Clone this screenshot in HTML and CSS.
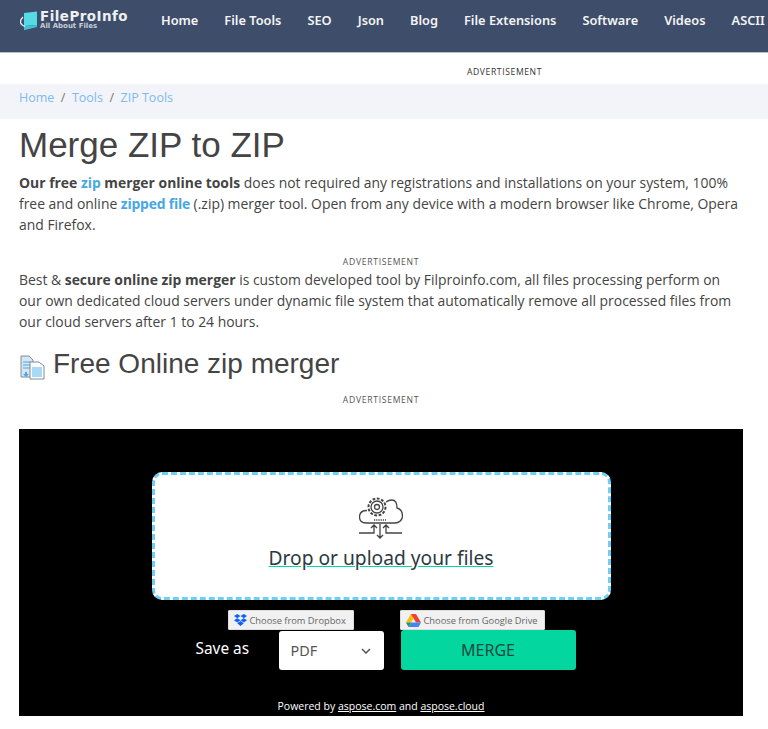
FILE: index.html
```html
<!DOCTYPE html>
<html lang="en">
<head>
	<meta charset="UTF-8">
	<title>Merge ZIP to ZIP</title>
	<link rel="stylesheet" href="styles.css">
</head>
<body>
	<div class="top-nav">
		<a class="logo" href="#">
			<svg class="logo-mark" width="18" height="20" viewBox="0 0 18 20">
				<path d="M4 2 L17 0.5 V14 L4 15 Z" fill="#56dbe6"/>
				<path d="M4 15 L17 14 V16 L5 19 L4 19 Z" fill="#3fc3d4"/>
				<path d="M3 6 C-1 10 0 14 5 15.5" fill="none" stroke="#e6edf3" stroke-width="1.3"/>
			</svg>
			<span class="logo-text">
				<span class="logo-name">FileProInfo</span>
				<span class="logo-sub">All About Files</span>
			</span>
		</a>
		<a class="nav-link" href="#">Home</a>
		<a class="nav-link" href="#">File Tools</a>
		<a class="nav-link" href="#">SEO</a>
		<a class="nav-link" href="#">Json</a>
		<a class="nav-link" href="#">Blog</a>
		<a class="nav-link" href="#">File Extensions</a>
		<a class="nav-link" href="#">Software</a>
		<a class="nav-link" href="#">Videos</a>
		<a class="nav-link" href="#">ASCII</a>
	</div>

	<div class="ad-top">ADVERTISEMENT</div>

	<div class="breadcrumb">
		<a href="#">Home</a><span class="sep">/</span><a href="#">Tools</a><span class="sep">/</span><a href="#">ZIP Tools</a>
	</div>

	<div class="content">
		<h1>Merge ZIP to ZIP</h1>
		<p><b>Our free <a href="#">zip</a> merger online tools</b> does not required any registrations and installations on your system, 100% free and online <a class="tight-link" href="#">zipped file</a> (.zip) merger tool. Open from any device with a modern browser like Chrome, Opera and Firefox.</p>
		<div class="ad-label ad-mid">ADVERTISEMENT</div>
		<p>Best &amp; <b>secure online zip merger</b> is custom developed tool by Filproinfo.com, all files processing perform on our own dedicated cloud servers under dynamic file system that automatically remove all processed files from our cloud servers after 1 to 24 hours.</p>
		<h2>
			<svg class="doc-icon" width="26" height="26" viewBox="0 0 26 26">
				<path d="M2 2 H10 L14 6 V23 H2 Z" fill="#d8e6f2" stroke="#7f8c99"/>
				<path d="M4 8 H12 M4 11 H12 M4 14 H12" stroke="#4aa8e0"/>
				<path d="M6 18 H8 V20 H10 L7 23 L4 20 H6 Z" fill="#4aa8e0"/>
				<path d="M11 8 H20 L25 12 V25 H11 Z" fill="#fff" stroke="#7f8c99"/>
				<rect x="13" y="13" width="10" height="10" fill="#a9daf5"/>
			</svg>
			Free Online zip merger
		</h2>
		<div class="ad-label ad-low">ADVERTISEMENT</div>

		<div class="app-panel">
			<div class="drop-box">
				<svg class="cloud-icon" width="44" height="42" viewBox="0 0 44 42" fill="none" stroke="#444" stroke-width="1.3">
					<path d="M8 26 C2 26 0.5 23 0.5 20 C0.5 16 3 13.5 8 13.5 M27 5 C29 3.5 31 3 33 3 C37 3 38 7 38 11 C42 12 43.5 15 43.5 19 C43.5 23 40 26 36 26 H8"/>
					<circle cx="18" cy="10" r="8.5" stroke-width="2" stroke-dasharray="2.8 1.6"/>
					<circle cx="18" cy="10" r="6"/>
					<circle cx="18" cy="10" r="2.5"/>
					<path d="M15 23 H27" stroke-dasharray="1.2 1" stroke-width="1.4"/>
					<path d="M0 36 H15 V29 M12 31 L15 28 L18 31 M21 27 V41 M18 38 L21 41 L24 38 M24 31 L27 28 L30 31 M27 29 V36 H43"/>
				</svg>
				<a class="drop-link" href="#">Drop or upload your files</a>
			</div>
			<div class="controls">
				<div class="save-col">
					<button class="picker picker-dropbox">
						<svg width="13" height="12" viewBox="0 0 13 12" fill="#0f62fe">
							<path d="M3.2 0 L6.5 2.1 L3.2 4.2 L0 2.1 Z M9.8 0 L13 2.1 L9.8 4.2 L6.5 2.1 Z M0 6.3 L3.2 4.2 L6.5 6.3 L3.2 8.4 Z M9.8 4.2 L13 6.3 L9.8 8.4 L6.5 6.3 Z M3.2 9.2 L6.5 7 L9.8 9.2 L6.5 12 Z"/>
						</svg>
						Choose from Dropbox
					</button>
					<div class="save-row">
						<span class="save-label">Save as</span>
						<div class="format-select">
							PDF
							<svg width="10" height="6" viewBox="0 0 10 6" fill="none" stroke="#555" stroke-width="1.5"><path d="M1 1 L5 5 L9 1"/></svg>
						</div>
					</div>
				</div>
				<div class="merge-col">
					<button class="picker picker-drive">
						<svg width="15" height="13" viewBox="0 0 15 13">
							<path d="M5 0 H10 L5 8.5 H0 Z" fill="#fbbc04"/>
							<path d="M5 0 H10 L15 8.5 H10 Z" fill="#ea4335"/>
							<path d="M5 8.5 H15 L12.5 13 H2.5 Z" fill="#4285f4"/>
							<path d="M0 8.5 H5 L2.5 13 Z" fill="#1a9c5b"/>
						</svg>
						Choose from Google Drive
					</button>
					<button class="merge-btn">MERGE</button>
				</div>
			</div>
			<div class="powered">Powered by <a href="#">aspose.com</a> and <a href="#">aspose.cloud</a></div>
		</div>
	</div>
</body>
</html>
```

FILE: styles.css
```css
*{
	margin: 0;
	padding: 0;
	box-sizing: border-box;
}
body{
	font-family: "Open Sans", "Noto Sans", sans-serif;
	font-size: 13.92px;
	line-height: 21px;
	color: #444;
	background: #fff;
	overflow: hidden;
}
a{
	color: #46a7e4;
	text-decoration: none;
}

/* top bar */
.top-nav{
	display: flex;
	align-items: center;
	gap: 26px;
	height: 53px;
	padding: 0 0 11px 20px;
	background: #3e4d69;
	border-bottom: 1px solid #b6bcc8;
	white-space: nowrap;
	overflow: hidden;
}
.nav-link{
	flex: none;
	font-family: "Noto Sans", sans-serif;
	font-size: 12.8px;
	font-weight: 600;
	color: #f3f4f6;
}
.logo{
	flex: none;
	display: flex;
	align-items: center;
	gap: 2px;
	width: 115px;
	color: #eef1f4;
}
.logo-mark{
	flex: none;
}
.logo-text{
	display: flex;
	flex-direction: column;
}
.logo-name{
	font-family: "DejaVu Sans", sans-serif;
	font-size: 13.4px;
	font-weight: 700;
	line-height: 12px;
	letter-spacing: 0.5px;
}
.logo-sub{
	font-family: "DejaVu Sans", sans-serif;
	font-size: 7px;
	font-weight: 700;
	line-height: 7px;
	color: #c8ced8;
}

/* ad labels */
.ad-top{
	height: 31px;
	padding: 12px 0 0 467px;
	font-size: 8.6px;
	line-height: 14px;
	letter-spacing: 0.6px;
	color: #333;
}
.ad-label{
	font-size: 8.6px;
	line-height: 12px;
	letter-spacing: 0.7px;
	text-align: center;
	color: #555;
}
.ad-mid{
	margin-top: 21px;
}
.ad-mid + p{
	margin-top: 1px;
}
.ad-low{
	margin-top: 14px;
}

.breadcrumb{
	display: flex;
	align-items: center;
	height: 35px;
	padding: 0 19px 9px;
	font-size: 12.5px;
	background: #f2f4f9;
}
.breadcrumb a{
	color: #7dbbed;
}
.breadcrumb .sep{
	margin: 0 6.5px;
	color: #777;
}

.content{
	padding: 0 25px 0 19px;
}
h1{
	margin-top: 6px;
	font-family: "Liberation Sans", Arial, sans-serif;
	font-size: 35px;
	font-weight: 400;
	line-height: 40px;
	color: #444;
}
.content h1 + p{
	margin-top: 7px;
}
.content p a{
	font-weight: 700;
}
.content p a.tight-link{
	letter-spacing: -0.2px;
}
h2{
	display: flex;
	align-items: center;
	gap: 8px;
	margin-top: 16px;
	font-family: "Liberation Sans", Arial, sans-serif;
	font-size: 28px;
	font-weight: 400;
	line-height: 32px;
	color: #444;
}
.doc-icon{
	flex: none;
	margin-top: 5px;
}

/* black tool panel */
.app-panel{
	display: flex;
	flex-direction: column;
	align-items: center;
	height: 287px;
	margin-top: 23px;
	padding-top: 43px;
	background: #000;
}
.drop-box{
	display: flex;
	flex-direction: column;
	align-items: center;
	width: 459px;
	height: 128px;
	padding-top: 22px;
	background: #fff;
	border: 3px dashed #6ccff6;
	border-radius: 10px;
}
.cloud-icon{
	flex: none;
	margin-bottom: 6px;
}
.drop-link{
	font-family: "Noto Sans", sans-serif;
	font-size: 19.2px;
	line-height: 26px;
	color: #2b3a42;
	text-decoration: underline;
	text-decoration-color: #04d6a0;
}
.controls{
	display: flex;
	width: 459px;
	margin-top: 10px;
}
.save-col{
	display: flex;
	flex-direction: column;
	width: 219px;
	margin-left: 44px;
}
.merge-col{
	display: flex;
	flex-direction: column;
	margin-left: -15px;
}
.picker{
	display: inline-flex;
	align-items: center;
	gap: 3px;
	height: 20px;
	padding: 0 5px;
	font-family: "Open Sans", sans-serif;
	font-size: 9.3px;
	color: #666;
	background: #f1f1f1;
	border: 1px solid #ddd;
	border-radius: 1px;
	align-self: flex-start;
	white-space: nowrap;
}
.picker-dropbox{
	margin-left: 32px;
	width: 126px;
}
.picker-drive{
	width: 145px;
	position: relative;
	z-index: 1;
}
.save-row{
	display: flex;
	align-items: flex-start;
	margin-top: 1px;
}
.save-label{
	width: 83px;
	margin-top: 7px;
	font-family: "Noto Sans", sans-serif;
	font-size: 15.4px;
	color: #fff;
}
.format-select{
	display: flex;
	align-items: center;
	justify-content: space-between;
	width: 105px;
	height: 39px;
	padding: 0 13px 0 12px;
	font-family: "Noto Sans", sans-serif;
	font-size: 14.4px;
	color: #555;
	background: #fff;
	border-radius: 3px;
}
.merge-btn{
	width: 175px;
	height: 40px;
	margin-left: 1px;
	font-family: "Noto Sans", sans-serif;
	font-size: 16px;
	color: #17493f;
	background: #04d6a0;
	border: none;
	border-radius: 3px;
}
.powered{
	margin-top: 28px;
	font-family: "Open Sans", sans-serif;
	font-size: 10.5px;
	line-height: 16px;
	color: #fff;
}
.powered a{
	color: #fff;
	text-decoration: underline;
}
```
